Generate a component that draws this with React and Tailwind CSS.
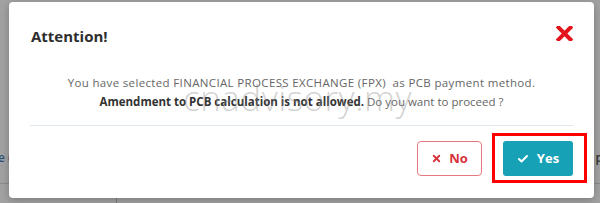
import { X, Check } from 'lucide-react';

const Modal = () => {
  return (
    <div className="absolute left-[9px] top-[2px] w-[585px] h-[196px] bg-white rounded-[4px] shadow-[0_2px_8px_rgba(0,0,0,0.25)] overflow-hidden">
      {/* Header */}
      <div className="flex items-center justify-between px-[22px] pt-[22px] h-[50px]">
        <h2 className="text-[15px] font-bold text-[#2d2d2d] -mt-[4px]">Attention!</h2>
        <svg width="17" height="15" viewBox="0 0 17 15" className="mr-[-1px] -mt-[9px]">
          <path d="M2.5 1.5 L14.5 13.5 M14.5 1.5 L2.5 13.5" stroke="#e3161e" strokeWidth="4" strokeLinecap="square" />
        </svg>
      </div>

      {/* Body */}
      <div className="relative flex flex-col items-center pt-[21px] text-[11.5px] leading-[19px] text-[#666]">
        <p className="tracking-[0.35px]">You have selected FINANCIAL PROCESS EXCHANGE (FPX)&nbsp; as PCB payment method.</p>
        <p>
          <span className="font-bold text-[#333]">Amendment to PCB calculation is not allowed.</span> Do you want to proceed ?
        </p>
        {/* watermark */}
        <span className="absolute left-[174px] top-[28px] text-[35px] leading-none font-light text-[#8e8e8e]/40 tracking-[0.5px] pointer-events-none">
          cnadvisory.my
        </span>
      </div>

      <div className="mx-[21px] mt-[14px] border-t border-[#dfe6ee]" />

      {/* Footer */}
      <div className="flex justify-end gap-[21px] px-[21px] pt-[15px]">
        <button className="flex items-center justify-center gap-[7px] w-[65px] h-[35px] rounded-[4px] border border-[#e57a7e] text-[#d8323a] text-[13px] font-bold">
          <X size={11} strokeWidth={4} />
          No
        </button>
        <div className="relative">
          <button className="flex items-center justify-center gap-[8px] w-[70px] h-[35px] rounded-[3px] bg-[#17a1b6] text-white text-[13px] font-bold">
            <Check size={12} strokeWidth={4} />
            Yes
          </button>
          <div className="absolute -left-[11px] -top-[8px] -right-[14px] -bottom-[7px] border-[3px] border-[#ff0000] pointer-events-none" />
        </div>
      </div>
    </div>
  );
};

const App = () => {
  return (
    <div className="relative w-[600px] h-[203px] overflow-hidden bg-[#a2a2a2]" style={{ fontFamily: '"Open Sans", Arial, sans-serif' }}>
      {/* page behind the dimmed overlay */}
      <div className="flex flex-col h-full">
        <div className="h-[2px]" />
        <div className="flex items-center justify-between h-[164px] pt-[147px] text-[12px] font-semibold">
          <span className="text-[#2f4f78] -ml-[2px]">e (</span>
          <span className="text-[#333] -mr-[3px]">p</span>
        </div>
        <div className="mt-[17px] border-t border-[#8c8c8c]" />
        <div className="flex-1 ml-[116px] border-l border-[#7d7d7d]" />
      </div>
      <Modal />
    </div>
  );
};

export default App;
